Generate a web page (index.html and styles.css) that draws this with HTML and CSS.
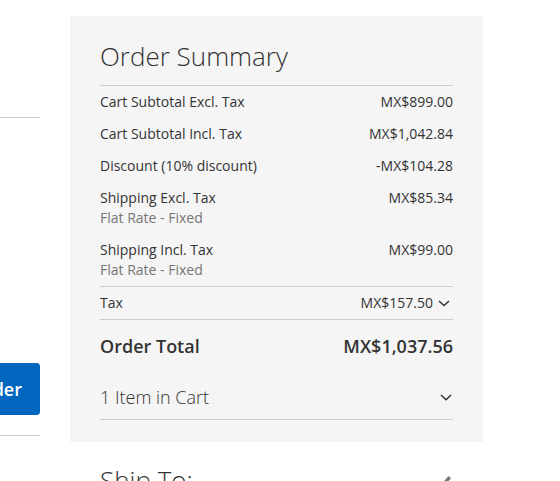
FILE: index.html
```html
<!DOCTYPE html>
<html lang="en">
<head>
    <meta charset="UTF-8">
    <meta name="viewport" content="width=device-width, initial-scale=1.0">
    <title>Checkout</title>
    <link rel="stylesheet" href="styles.css">
</head>
<body>
    <div class="checkout">
        <!-- main column (mostly off screen) -->
        <div class="checkout-main">
            <div class="step-shipping"></div>
            <div class="actions-toolbar">
                <button class="action-primary">Place Order</button>
            </div>
        </div>

        <!-- sidebar -->
        <div class="sidebar">
            <div class="summary">
                <span class="summary-title">Order Summary</span>
                <table class="totals">
                    <tr>
                        <th>Cart Subtotal Excl. Tax</th>
                        <td>MX$899.00</td>
                    </tr>
                    <tr>
                        <th>Cart Subtotal Incl. Tax</th>
                        <td>MX$1,042.84</td>
                    </tr>
                    <tr>
                        <th>Discount (10% discount)</th>
                        <td>-MX$104.28</td>
                    </tr>
                    <tr>
                        <th>Shipping Excl. Tax<span class="value">Flat Rate - Fixed</span></th>
                        <td>MX$85.34</td>
                    </tr>
                    <tr>
                        <th>Shipping Incl. Tax<span class="value">Flat Rate - Fixed</span></th>
                        <td>MX$99.00</td>
                    </tr>
                    <tr class="tax">
                        <th>Tax</th>
                        <td>MX$157.50<svg class="chevron-sm" width="12" height="7" viewBox="0 0 12 7"><polyline points="1,1 6,5.5 11,1" fill="none" stroke="#333" stroke-width="1.5"/></svg></td>
                    </tr>
                    <tr class="grand">
                        <th>Order Total</th>
                        <td>MX$1,037.56</td>
                    </tr>
                </table>
                <div class="items-in-cart">
                    <span>1 Item in Cart</span>
                    <svg width="12" height="7" viewBox="0 0 12 7"><polyline points="1,1 6,5.8 11,1" fill="none" stroke="#333" stroke-width="1.5"/></svg>
                </div>
            </div>

            <div class="ship-to">
                <span class="ship-title">Ship To:</span>
                <svg class="edit-icon" width="12" height="14" viewBox="0 0 12 14"><path d="M8.5 1 L11 3.5 L4 10.5 L1 11.5 L2 8.5 Z" fill="#757575"/></svg>
            </div>
        </div>
    </div>
</body>
</html>
```

FILE: styles.css
```css
* {
    margin: 0;
    padding: 0;
    box-sizing: border-box;
}

body {
    background: #fff;
    font-family: 'Open Sans', 'Noto Sans', sans-serif;
    color: #333;
    font-size: 14px;
    line-height: 20px;
    overflow: hidden;
}

.checkout {
    display: flex;
    align-items: flex-start;
    gap: 30px;
}

/* left column */
.checkout-main {
    width: 40px;
    overflow: hidden;
}

.step-shipping {
    height: 118px;
    border-bottom: 1px solid #ccc;
}

.actions-toolbar {
    display: flex;
    justify-content: flex-end;
    margin-top: 245px;
    padding-bottom: 20px;
    border-bottom: 1px solid #ccc;
}

.action-primary {
    flex-shrink: 0;
    background: #0066c0;
    color: #fff;
    border: 1px solid #0066c0;
    border-radius: 3px;
    font-family: inherit;
    font-size: 18px;
    font-weight: 600;
    line-height: 22px;
    padding: 14px 17px;
    white-space: nowrap;
}

/* sidebar */
.sidebar {
    width: 413px;
    margin-top: 16px;
}

.summary {
    background: #f5f5f5;
    padding: 22px 30px;
}

.summary-title {
    display: block;
    font-size: 26px;
    font-weight: 300;
    line-height: 36px;
    padding-bottom: 11px;
    border-bottom: 1px solid #ccc;
}

.totals {
    width: 100%;
    border-collapse: collapse;
}

.totals th,
.totals td {
    padding: 6px 0;
    vertical-align: top;
    font-weight: 400;
}

.totals th {
    text-align: left;
}

.totals td {
    text-align: right;
    white-space: nowrap;
}

.totals .value {
    display: block;
    color: #757575;
}

.totals .tax th,
.totals .tax td {
    border-top: 1px solid #ccc;
    border-bottom: 1px solid #ccc;
}

.chevron-sm {
    margin: 0 3px 0 5px;
    vertical-align: 1px;
}

.totals .grand th,
.totals .grand td {
    padding-top: 13px;
    font-size: 18px;
    font-weight: 600;
    line-height: 26px;
}

.items-in-cart {
    display: flex;
    align-items: center;
    justify-content: space-between;
    padding: 19px 1px 9px 0;
    border-bottom: 1px solid #ccc;
    font-size: 18px;
    font-weight: 300;
    line-height: 26px;
}

/* ship to */
.ship-to {
    display: flex;
    justify-content: space-between;
    padding: 0 30px;
    margin-top: 20px;
}

.ship-title {
    font-size: 26px;
    font-weight: 300;
    line-height: 36px;
}

.edit-icon {
    margin-top: 13px;
    margin-right: 1px;
}
```
